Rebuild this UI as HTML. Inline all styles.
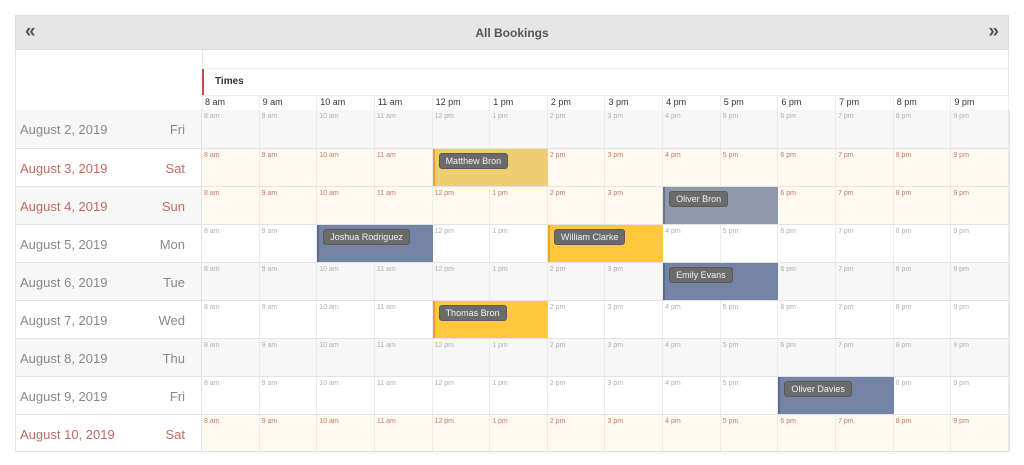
<!DOCTYPE html>
<html><head><style>
*{box-sizing:border-box;margin:0;padding:0}
body{width:1024px;height:465px;background:#fff;font-family:"Liberation Sans",sans-serif;position:relative;overflow:hidden}
.a{position:absolute}
.hdr{left:15px;top:15px;width:994px;height:35px;background:#e6e6e6;border:1px solid #ddd}
.hdr .t{position:absolute;left:0;right:0;top:10px;text-align:center;font-weight:bold;font-size:12px;color:#555}
.hdr .l,.hdr .r{position:absolute;top:6px;font-size:19px;font-weight:bold;color:#555;line-height:19px}
.row{position:absolute;left:15px;width:994px;border-bottom:1px solid #e3e3e3}
.lc{position:absolute;left:0;top:0;bottom:0;width:187px;font-size:13px;border-left:1px solid #e3e3e3;border-right:1px solid #e3e3e3}
.lc .d{position:absolute;left:4px;top:12px}
.lc .w{position:absolute;right:16px;top:12px}
.c{position:absolute;top:0;bottom:0;border-right:1px solid #ebebeb;font-size:7px;padding:3px 0 0 2px}
.bk{position:absolute;top:0;bottom:0}
.lb{position:absolute;left:4px;top:4px;background:#6b6b6b;color:#f2f2f2;font-size:9px;padding:2px 6px;border-radius:3px;border:1px solid #5a5a5a}
</style></head><body>
<div class="a hdr"><span class="l" style="left:9px">«</span><div class="t">All Bookings</div><span class="r" style="right:9px">»</span></div>
<div class="a" style="left:15px;top:50px;width:994px;height:60px;border-left:1px solid #e3e3e3;border-right:1px solid #e3e3e3"></div>
<div class="a" style="left:202px;top:50px;width:1px;height:60px;background:#e8e8e8"></div>
<div class="a" style="left:202px;top:68px;width:807px;height:1px;background:#eee"></div>
<div class="a" style="left:202px;top:69px;width:2px;height:26px;background:#c0504d"></div>
<div class="a" style="left:215px;top:76px;font-size:10px;font-weight:bold;color:#333">Times</div>
<div class="a" style="left:202px;top:95px;width:807px;height:1px;background:#eee"></div>
<div id="hours"></div>
<div id="rows"></div>
<script>
var H=["8 am","9 am","10 am","11 am","12 pm","1 pm","2 pm","3 pm","4 pm","5 pm","6 pm","7 pm","8 pm","9 pm"];
var cw=807/14,h="";
for(var i=0;i<14;i++){h+='<div class="a" style="left:'+(202+i*cw)+'px;top:96px;width:'+cw+'px;height:14px;border-right:1px solid #eee;font-size:9px;color:#333;padding:1px 0 0 3px">'+H[i]+'</div>';}
document.getElementById("hours").outerHTML=h;
var R=[["August 2, 2019","Fri",0,"#f7f7f7","#f7f7f7"],["August 3, 2019","Sat",1,"#fff","#fffaf0"],["August 4, 2019","Sun",1,"#f7f7f7","#fffaf0"],["August 5, 2019","Mon",0,"#fff","#fff"],["August 6, 2019","Tue",0,"#f7f7f7","#f7f7f7"],["August 7, 2019","Wed",0,"#fff","#fff"],["August 8, 2019","Thu",0,"#f7f7f7","#f7f7f7"],["August 9, 2019","Fri",0,"#fff","#fff"],["August 10, 2019","Sat",1,"#fff","#fffaf0"]];
var B={1:[[4,"Matthew Bron","#efcd72","#f0a030"]],2:[[8,"Oliver Bron","#8f99aa","#6a7488"]],3:[[2,"Joshua Rodriguez","#7484a6","#5a6a8c"],[6,"William Clarke","#ffc83f","#f0a030"]],4:[[8,"Emily Evans","#7484a6","#5a6a8c"]],5:[[4,"Thomas Bron","#ffc83f","#f0a030"]],7:[[10,"Oliver Davies","#7484a6","#5a6a8c"]]};
var s="",yy=110;
for(var r=0;r<9;r++){var x=R[r],ht=(r==0?39:(r==8?37:38));var col=x[2]?"#bf6a5f":"#888",cc=x[2]?"#c27a6f":"#b0b0b0";
s+='<div class="row" style="top:'+yy+'px;height:'+ht+'px;background:'+x[4]+'">';
s+='<div class="lc" style="background:'+x[3]+';color:'+col+'"><span class="d">'+x[0]+'</span><span class="w">'+x[1]+'</span></div>';
for(var i=0;i<14;i++)s+='<div class="c" style="left:'+(187+i*cw)+'px;width:'+cw+'px;color:'+cc+'">'+H[i]+'</div>';
(B[r]||[]).forEach(function(b){s+='<div class="bk" style="left:'+(187+b[0]*cw)+'px;width:'+(2*cw)+'px;background:'+b[2]+';border-left:2px solid '+b[3]+'"><span class="lb">'+b[1]+'</span></div>';});
s+='<div class="a" style="right:-1px;top:0;bottom:0;width:1px;background:#e3e3e3"></div></div>';yy+=ht;}
document.getElementById("rows").outerHTML=s;
</script>
</body></html>
